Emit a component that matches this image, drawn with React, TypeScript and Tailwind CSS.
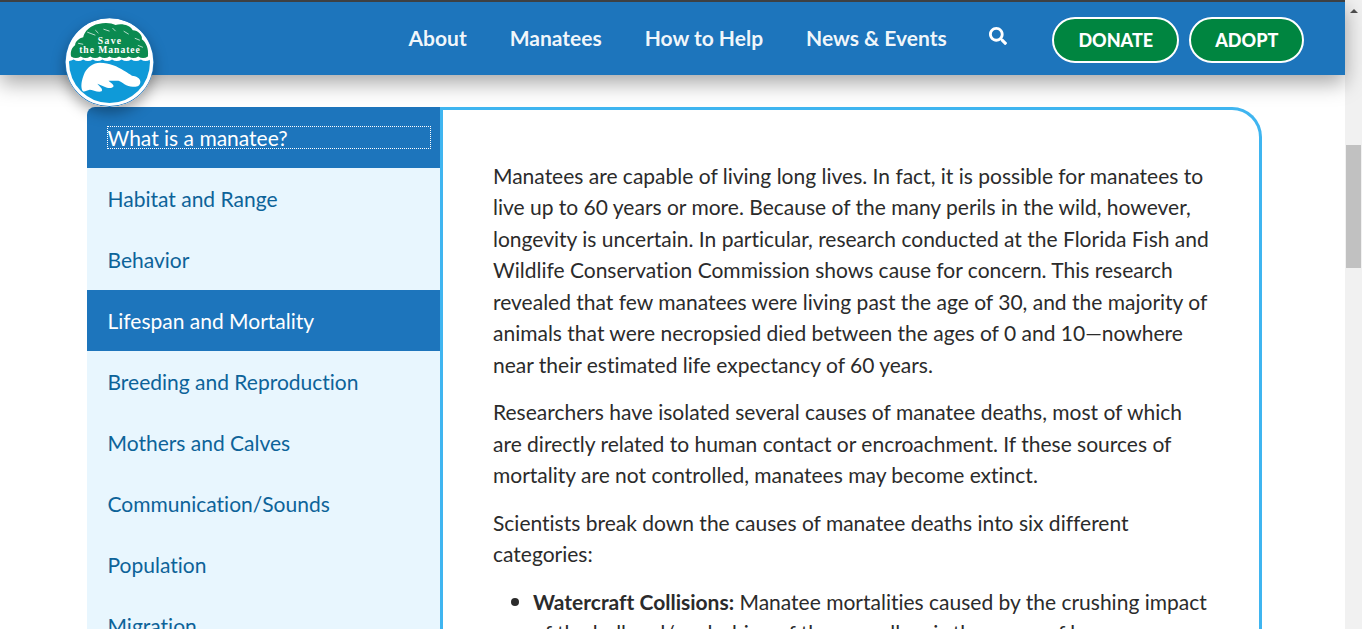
import { FaSearch } from "react-icons/fa";

const font = { fontFamily: "Lato, sans-serif" };

const navLinks = ["About", "Manatees", "How to Help", "News & Events"];

const sideLinks = [
  "What is a manatee?",
  "Habitat and Range",
  "Behavior",
  "Lifespan and Mortality",
  "Breeding and Reproduction",
  "Mothers and Calves",
  "Communication/Sounds",
  "Population",
  "Migration",
];

function Logo() {
  return (
    <svg viewBox="0 0 88 88" className="absolute left-[65px] top-[16px] h-[89px] w-[89px] rounded-full shadow-[0_6px_14px_rgba(0,0,0,0.35)]">
      <defs>
        <clipPath id="inner">
          <circle cx="44" cy="44" r="40" />
        </clipPath>
      </defs>
      <circle cx="44" cy="44" r="44" fill="#1d75bc" />
      <circle cx="44" cy="43.6" r="43.4" fill="#fff" />
      <path
        clipPath="url(#inner)"
        d="M-1 41q4.750 3 9.500 0q4.750 3 9.500 0q4.750 3 9.500 0q4.750 3 9.500 0q4.750 3 9.500 0q4.750 3 9.500 0q4.750 3 9.500 0q4.750 3 9.500 0q4.750 3 9.500 0L90 41L90 90L-1 90Z"
        fill="#0f9ad8"
      />
      <path
        d="M6 38C5 33 7 29 10 27C10 23 14 20 18 19C19 13 26 7 33 6C40 4 46 5 50 7C56 5 64 7 67 12C72 12 77 17 76 21C80 24 83 30 82 38q-4.750 3-9.500 0q-4.750 3-9.500 0q-4.750 3-9.500 0q-4.750 3-9.500 0q-4.750 3-9.500 0q-4.750 3-9.500 0q-4.750 3-9.500 0q-4.750 3-9.500 0Z"
        fill="#0a8a50"
      />
      <path d="M22 14l8 3M30 12l3 3M38 11l6 2M47 10l3 3M58 13l5 3M13 25l5 1M69 20l5 2M72 27l5 2" stroke="#fff" strokeWidth="0.7" fill="none" />
      <text x="44" y="26" textAnchor="middle" fill="#fff" fontFamily="Liberation Serif, serif" fontWeight="700" fontSize="9.500" textLength="23">Save</text>
      <text x="44" y="34.700" textAnchor="middle" fill="#fff" fontFamily="Liberation Serif, serif" fontWeight="700" fontSize="9.500" textLength="60">the Manatee</text>
      <path
        d="M34.500 44.300C44 44.500 52 48 58 52C62 54 64 56 66.200 57C70 57.500 74.500 59 74.500 63C74.500 67 71 68.500 67 68C61 68 56 63 52.800 62L43 62C45 64 49 66 47.800 68C46 70 42 69.500 39 68L32 65C34 68 38 70 36.200 72.500C33 74 27 71 24.500 71C21 72 18 74 17 71.500C15.500 68 16 62 19.500 54C22 49 28 44.300 34.500 44.300Z"
        fill="#fff"
      />
    </svg>
  );
}

export default function App() {
  return (
    <div className="flex h-[629px] w-[1362px] overflow-hidden bg-white text-[#2b2b2b] [font-variant-ligatures:none]" style={font}>
      <div className="relative w-[1345px] shrink-0">
        <header className="relative z-10 flex h-[75px] items-start border-t-2 border-[#3d4043] bg-[#1d75bc] pl-[408.500px] shadow-[0_8px_20px_rgba(0,0,0,0.35)]">
          <nav className="flex h-[73px] items-start gap-[43px] pt-[22px] text-[21px] font-bold leading-[28px] text-white/95">
            {navLinks.map((link) => (
              <a key={link}>{link}</a>
            ))}
          </nav>
          <FaSearch className="ml-[42px] mt-[25px] h-[18px] w-[18px] text-white" />
          <div className="ml-[45.500px] mt-[15px] flex gap-[10px] text-[18px] font-black text-white">
            <a className="flex h-[46px] w-[127px] items-center justify-center rounded-full border-2 border-white bg-[#008540]">DONATE</a>
            <a className="flex h-[46px] w-[115px] items-center justify-center rounded-full border-2 border-white bg-[#008540]">ADOPT</a>
          </div>
          <Logo />
        </header>

        <div className="ml-[87px] mt-[32px] flex w-[1175px]">
          <aside className="w-[353px] shrink-0 overflow-hidden rounded-tl-[8px] bg-[#e8f6fe] text-[21px] text-[#0d6399]">
            {sideLinks.map((link, i) => (
              <a
                key={link}
                className={`flex h-[61px] items-center pl-[20.500px] ${i === 0 || i === 3 ? "bg-[#1d75bc] text-white" : ""}`}
              >
                {i === 0 ? (
                  <span className="-ml-px block w-[324px] border border-dotted border-white leading-[21px]">{link}</span>
                ) : (
                  link
                )}
              </a>
            ))}
          </aside>
          <main className="h-[560px] flex-1 rounded-tr-[30px] border-[3px] border-b-0 border-[#3fb5f0] pl-[50px] pr-[46px] pt-[49.500px] text-[21px] leading-[31.500px]">
            <p className="mb-4">
              Manatees are capable of living long lives. In fact, it is possible for manatees to live up to 60 years or more. Because of the many perils in the wild, however, longevity is uncertain. In particular, research conducted at the Florida Fish and Wildlife Conservation Commission shows cause for concern. This research revealed that few manatees were living past the age of 30, and the majority of animals that were necropsied died between the ages of 0 and 10—nowhere near their estimated life expectancy of 60 years.
            </p>
            <p className="mb-4">
              Researchers have isolated several causes of manatee deaths, most of which are directly related to human contact or encroachment. If these sources of mortality are not controlled, manatees may become extinct.
            </p>
            <p className="mb-4">Scientists break down the causes of manatee deaths into six different categories:</p>
            <ul className="pl-[18px]">
              <li className="flex gap-[14px]">
                <span className="mt-[12px] h-[8px] w-[8px] shrink-0 rounded-full bg-[#2b2b2b]" />
                <span>
                  <strong>Watercraft Collisions:</strong> Manatee mortalities caused by the crushing impact of the hull and/or slashing of the propellers is the cause of human
                </span>
              </li>
            </ul>
          </main>
        </div>
      </div>

      <div className="flex w-[17px] shrink-0 flex-col items-center bg-[#f1f1f1] pt-[9px]">
        <div className="h-0 w-0 border-x-[4px] border-b-[4px] border-x-transparent border-b-[#505050]" />
        <div className="mt-[132px] h-[123px] w-[15px] bg-[#c1c1c1]" />
      </div>
    </div>
  );
}
